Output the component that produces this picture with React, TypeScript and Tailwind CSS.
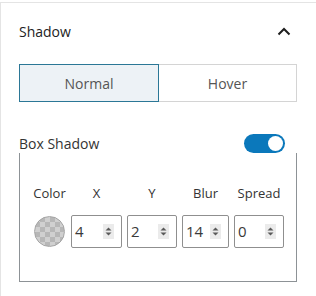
import React from 'react';

const font = { fontFamily: '"Open Sans", "Noto Sans", sans-serif' };

const Spinner: React.FC = () => (
  <svg width="11" height="15" viewBox="0 0 11 15" className="mr-[7px] shrink-0">
    <rect width="11" height="15" fill="#ebebeb" />
    <path d="M2.5 6.5 L5.5 3.5 L8.5 6.5 Z" fill="#5a5a5a" />
    <path d="M2.5 8.5 L5.5 11.5 L8.5 8.5 Z" fill="#5a5a5a" />
  </svg>
);

const NumberBox: React.FC<{ value: string; width: string }> = ({ value, width }) => (
  <div className={`flex h-[33px] items-center rounded-[2px] border border-[#8f8f8f] bg-white ${width}`}>
    <span className="flex-1 pl-[3px] text-[15px] text-[#3a3a3a]">{value}</span>
    <Spinner />
  </div>
);

export default function App() {
  const cols = [
    { label: 'X', value: '4', width: 'w-[51px]' },
    { label: 'Y', value: '2', width: 'w-[50px]' },
    { label: 'Blur', value: '14', width: 'w-[47px]' },
    { label: 'Spread', value: '0', width: 'w-[50px]' },
  ];

  return (
    <div className="h-[296px] w-[316px] bg-white pt-[2px]" style={font}>
      <div className="h-[294px] border-l border-t border-[#e4e4e4]">
        {/* header */}
        <div className="flex h-[56px] items-center justify-between pl-[18px] pr-[25px]">
          <span className="text-[14px] font-medium text-[#222]">Shadow</span>
          <svg width="14" height="9" viewBox="0 0 14 9">
            <path d="M1.5 7.5 L7 2 L12.5 7.5" fill="none" stroke="#1e1e1e" strokeWidth="2" />
          </svg>
        </div>

        {/* tabs */}
        <div className="mt-[5px] grid h-[38px] grid-cols-[140px_138px] pl-[18px]">
          <div className="flex items-center justify-center border border-[#2b7796] bg-[#edf2f6] text-[14px] text-[#555]">
            Normal
          </div>
          <div className="flex items-center justify-center border-y border-r border-[#d4d4d4] text-[14px] text-[#555]">
            Hover
          </div>
        </div>

        {/* box shadow */}
        <div className="mt-[31px] pl-[18px] pr-[19px]">
          <div className="flex h-[20px] items-center justify-between pr-[12px]">
            <span className="text-[14px] text-[#333]">Box Shadow</span>
            <div className="flex h-[19px] w-[41px] items-center justify-end rounded-full bg-[#0b78bb] p-[2px]">
              <div className="h-[15px] w-[15px] rounded-full bg-white" />
            </div>
          </div>
          <div className="h-[129px] border-x border-b border-[#8d9296] pl-[13px] pt-[31px]">
            <div className="flex gap-[5px]">
              <div className="flex w-[33px] flex-col items-center">
                <span className="h-[18px] text-[13px] leading-[18px] text-[#333]">Color</span>
                <div className="mt-[13px] flex h-[33px] items-center">
                  <div className="h-[31px] w-[31px] rounded-full border border-[#a5a5a5] bg-[repeating-conic-gradient(#b7b7b7_0_25%,#d0d0d0_0_50%)] bg-[length:10px_10px]" />
                </div>
              </div>
              {cols.map((c) => (
                <div key={c.label} className="flex flex-col items-center">
                  <span className="h-[18px] text-[13px] leading-[18px] text-[#333]">{c.label}</span>
                  <div className="mt-[13px]">
                    <NumberBox value={c.value} width={c.width} />
                  </div>
                </div>
              ))}
            </div>
          </div>
        </div>
      </div>
    </div>
  );
}
